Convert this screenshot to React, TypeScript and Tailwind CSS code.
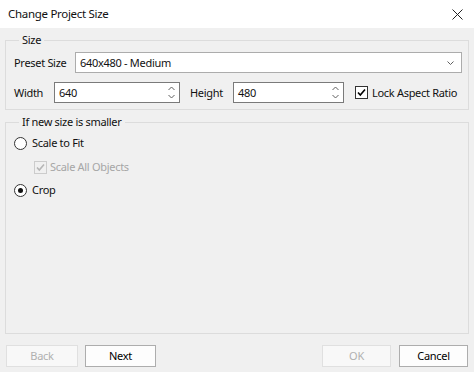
import React from "react";

const font = { fontFamily: '"Noto Sans", "Open Sans", "Liberation Sans", sans-serif' };

function Spin({ value, width }: { value: string; width: string }) {
  return (
    <div className={`${width} shrink-0 h-[21px] bg-white border border-[#7a7a7a] flex items-center justify-between pl-[4px] pr-[3px]`}>
      <span className="leading-none">{value}</span>
      <svg width="9" height="15" viewBox="0 0 9 15" className="text-[#606060]">
        <path d="M1.5 5 L4.5 2 L7.5 5" fill="none" stroke="currentColor" strokeWidth="1" />
        <path d="M1.5 10 L4.5 13 L7.5 10" fill="none" stroke="currentColor" strokeWidth="1" />
      </svg>
    </div>
  );
}

function Check({ disabled }: { disabled?: boolean }) {
  return (
    <div
      className={`w-[13px] h-[13px] shrink-0 border flex items-center justify-center ${
        disabled ? "border-[#cccccc] bg-[#f0f0f0]" : "border-[#333333] bg-white"
      }`}
    >
      <svg width="11" height="11" viewBox="0 0 11 11">
        <path
          d="M2 5.5 L4.3 8 L9 2.5"
          fill="none"
          stroke={disabled ? "#b5b5b5" : "#000000"}
          strokeWidth="1.6"
        />
      </svg>
    </div>
  );
}

function Radio({ checked }: { checked?: boolean }) {
  return (
    <div className="w-[13px] h-[13px] shrink-0 rounded-full border border-[#333333] bg-white flex items-center justify-center">
      {checked && <div className="w-[5px] h-[5px] rounded-full bg-[#111111]" />}
    </div>
  );
}

function Btn({ label, disabled, width }: { label: string; disabled?: boolean; width: string }) {
  return (
    <div
      className={`${width} h-[22px] flex items-center justify-center border ${
        disabled ? "border-[#e0e0e0] bg-[#f8f8f8] text-[#b0b0b0]" : "border-[#adadad] bg-[#fdfdfd] text-black"
      }`}
    >
      {label}
    </div>
  );
}

export default function App() {
  return (
    <div
      className="w-[474px] h-[372px] bg-[#f0f0f0] flex flex-col text-[11px] tracking-[-0.3px] leading-[16px] text-[#111111] overflow-hidden whitespace-nowrap"
      style={font}
    >
      <div className="h-[28px] bg-white flex items-center justify-between pl-[8px] pr-[11px] shrink-0">
        <span className="text-[11.5px]">Change Project Size</span>
        <svg width="11" height="11" viewBox="0 0 11 11">
          <path d="M0.5 0.5 L10.5 10.5 M10.5 0.5 L0.5 10.5" stroke="#222" strokeWidth="1" />
        </svg>
      </div>

      <div className="px-[5px] flex flex-col shrink-0">
        <fieldset className="mt-[4px] border border-[#dcdcdc] pl-[8px] pr-[6px] pb-[6px]">
          <legend className="ml-[5px] px-[3px] leading-[16px]">Size</legend>
          <div className="mt-[4px] flex items-center">
            <span className="w-[61px] shrink-0">Preset Size</span>
            <div className="flex-1 h-[21px] bg-white border border-[#acacac] flex items-center justify-between pl-[4px] pr-[7px]">
              <span>640x480 - Medium</span>
              <svg width="7" height="4" viewBox="0 0 7 4">
                <path d="M0.5 0.5 L3.5 3.5 L6.5 0.5" fill="none" stroke="#606060" strokeWidth="1" />
              </svg>
            </div>
          </div>
          <div className="mt-[9px] flex items-center">
            <span className="w-[40px] shrink-0">Width</span>
            <Spin value="640" width="w-[126px]" />
            <span className="ml-[10px] w-[43px] shrink-0">Height</span>
            <Spin value="480" width="w-[111px]" />
            <div className="ml-[11px] flex items-center gap-[4px]">
              <Check />
              <span>Lock Aspect Ratio</span>
            </div>
          </div>
        </fieldset>

        <fieldset className="mt-[4px] h-[220px] border border-[#dcdcdc] pl-[8px]">
          <legend className="ml-[5px] px-[3px] leading-[16px]">If new size is smaller</legend>
          <div className="mt-[5px] h-[16px] flex items-center gap-[5px]">
            <Radio />
            <span>Scale to Fit</span>
          </div>
          <div className="mt-[8px] ml-[20px] h-[16px] flex items-center gap-[3px] text-[#a6a6a6]">
            <Check disabled />
            <span>Scale All Objects</span>
          </div>
          <div className="mt-[7px] h-[16px] flex items-center gap-[5px]">
            <Radio checked />
            <span>Crop</span>
          </div>
        </fieldset>
      </div>

      <div className="mt-[11px] px-[6px] flex items-center shrink-0">
        <Btn label="Back" disabled width="w-[72px]" />
        <div className="ml-[7px]">
          <Btn label="Next" width="w-[71px]" />
        </div>
        <div className="flex-1" />
        <Btn label="OK" disabled width="w-[69px]" />
        <div className="ml-[8px]">
          <Btn label="Cancel" width="w-[69px]" />
        </div>
      </div>
    </div>
  );
}
